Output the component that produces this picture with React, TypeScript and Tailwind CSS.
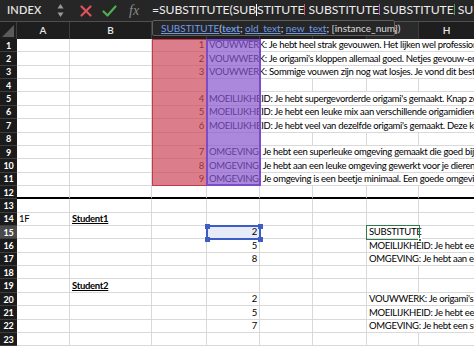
import React from "react";

type RowDef = {
  n: number;
  a?: string;
  b?: string;
  c?: number;
  d?: number;
  dText?: string;
  gText?: string;
  thick?: boolean;
  active?: boolean;
};

const rows: RowDef[] = [
  { n: 1, c: 1, dText: "VOUWWERK: Je hebt heel strak gevouwen. Het lijken wel professionele origami's!" },
  { n: 2, c: 2, dText: "VOUWWERK: Je origami's kloppen allemaal goed. Netjes gevouw-en!" },
  { n: 3, c: 3, dText: "VOUWWERK: Sommige vouwen zijn nog wat losjes. Je vond dit best lastig." },
  { n: 4 },
  { n: 5, c: 4, dText: "MOEILIJKHEID: Je hebt supergevorderde origami's gemaakt. Knap zeg!" },
  { n: 6, c: 5, dText: "MOEILIJKHEID: Je hebt een leuke mix aan verschillende origamidieren." },
  { n: 7, c: 6, dText: "MOEILIJKHEID: Je hebt veel van dezelfde origami's gemaakt. Deze keer" },
  { n: 8 },
  { n: 9, c: 7, dText: "OMGEVING: Je hebt een superleuke omgeving gemaakt die goed bij" },
  { n: 10, c: 8, dText: "OMGEVING: Je hebt aan een leuke omgeving gewerkt voor je dieren." },
  { n: 11, c: 9, dText: "OMGEVING: Je omgeving is een beetje minimaal. Een goede omgeving" },
  { n: 12, thick: true },
  { n: 13 },
  { n: 14, a: "1F", b: "Student1" },
  { n: 15, d: 2, gText: "SUBSTITUTE", active: true },
  { n: 16, d: 5, gText: "MOEILIJKHEID: Je hebt een leuke mix" },
  { n: 17, d: 8, gText: "OMGEVING: Je hebt aan een leuke" },
  { n: 18 },
  { n: 19, b: "Student2" },
  { n: 20, d: 2, gText: "VOUWWERK: Je origami's kloppen" },
  { n: 21, d: 5, gText: "MOEILIJKHEID: Je hebt een leuke mix" },
  { n: 22, d: 7, gText: "OMGEVING: Je hebt een superleuke" },
  { n: 23 },
];

function Cell({ w, children, right, bottom, fill }: { w: string; children?: React.ReactNode; right?: boolean; bottom: string; fill?: string }) {
  return (
    <div className={`${w} shrink-0 h-full border-r border-r-[#d9d9d9] ${bottom} ${fill ?? ""} flex items-center overflow-hidden whitespace-nowrap ${right ? "justify-end pr-[2px]" : "pl-[2px]"}`}>
      {children}
    </div>
  );
}

function GridRow({ r }: { r: RowDef }) {
  const bottom = r.thick ? "border-b-2 border-b-black" : "border-b border-b-[#d9d9d9]";
  return (
    <div className="flex h-[13.36px]">
      <div className={`w-[17px] shrink-0 h-full flex items-center justify-center font-bold text-[9px] text-white border-b border-b-[#3d3d3d] ${r.active ? "bg-[#4a4a4a]" : "bg-[#1b1b1b]"}`}>
        {r.n}
      </div>
      <Cell w="w-[53px]" bottom={bottom}>{r.a}</Cell>
      <Cell w="w-[82px]" bottom={bottom}>
        {r.b && <span className="font-bold underline underline-offset-[1px]">{r.b}</span>}
      </Cell>
      <Cell w="w-[55px]" bottom={bottom} right>{r.c}</Cell>
      {r.dText ? (
        <div className={`flex-1 min-w-0 h-full ${bottom} flex items-center overflow-hidden whitespace-nowrap pl-[2px]`}>{r.dText}</div>
      ) : (
        <>
          <Cell w="w-[53px]" bottom={bottom} right fill={r.active ? "bg-[#e7eaf7]" : ""}>{r.d}</Cell>
          <Cell w="w-[53px]" bottom={bottom} />
          <Cell w="w-[54px]" bottom={bottom} />
          {r.gText ? (
            <div className={`flex-1 min-w-0 h-full ${bottom} flex items-center overflow-hidden whitespace-nowrap pl-[2px]`}>{r.gText}</div>
          ) : (
            <>
              <Cell w="w-[52px]" bottom={bottom} />
              <div className={`flex-1 h-full ${bottom}`} />
            </>
          )}
        </>
      )}
    </div>
  );
}

function Bar({ color }: { color: string }) {
  return <span className={`inline-block w-[1px] h-[11px] align-[-1px] ${color}`} />;
}

export default function App() {
  return (
    <div className="w-[474px] h-[346px] overflow-hidden bg-white font-['Lato',sans-serif] text-black relative">
      {/* formula bar */}
      <div className="flex items-center h-[22px] bg-[#262626] border-b border-b-[#505050]">
        <div className="w-[57px] shrink-0 pl-[7px] text-[11px] font-semibold text-[#e4e4e4] tracking-[0.2px]">INDEX</div>
        <svg width="7" height="15" viewBox="0 0 7 15" className="shrink-0">
          <path d="M3.5 1 L6.5 5.5 L0.5 5.5 Z" fill="#9a9a9a" />
          <path d="M3.5 14 L6.5 9.5 L0.5 9.5 Z" fill="#9a9a9a" />
        </svg>
        <svg width="12" height="12" viewBox="0 0 12 12" className="shrink-0 ml-[16px]">
          <path d="M1.5 1.5 L10.5 10.5 M10.5 1.5 L1.5 10.5" stroke="#e2505c" strokeWidth="2.2" strokeLinecap="round" />
        </svg>
        <svg width="15" height="12" viewBox="0 0 15 12" className="shrink-0 ml-[10px]">
          <path d="M1.5 6.5 L5.5 10.5 L13.5 1.5" stroke="#4fae4f" strokeWidth="2.2" fill="none" strokeLinecap="round" strokeLinejoin="round" />
        </svg>
        <span className="shrink-0 ml-[12px] w-[14px] italic text-[14px] leading-none text-[#8a8a8a] font-['Liberation_Serif',serif]">fx</span>
        <div className="ml-[9px] whitespace-nowrap text-[12.2px] text-[#ececec] tracking-[-0.05px]">
          =SUBSTITUTE(SUB<span className="inline-block w-[1px] h-[12px] bg-white align-[-2px]" />STITUTE<Bar color="bg-[#d9505f]" /> SUBSTITUTE<Bar color="bg-[#9b66d8]" /> SUBSTITUTE<Bar color="bg-[#3f9a55]" /> SUBSTITUTE<Bar color="bg-[#d9505f]" /> SUBSTITUTE
        </div>
      </div>

      {/* column headers */}
      <div className="flex h-[17px] bg-[#1e1e1e] text-[10px] text-[#e8e8e8] font-semibold">
        <div className="w-[17px] shrink-0 h-full relative border-r border-r-[#3d3d3d]">
          <svg width="12" height="12" viewBox="0 0 12 12" className="absolute right-[2px] bottom-[2px]">
            <path d="M12 0 L12 12 L0 12 Z" fill="#5a5a5a" />
          </svg>
        </div>
        <div className="w-[53px] shrink-0 flex items-center justify-center border-r border-r-[#3d3d3d]">A</div>
        <div className="w-[82px] shrink-0 flex items-center justify-center border-r border-r-[#3d3d3d]">B</div>
        <div className="w-[55px] shrink-0 flex items-center justify-center border-r border-r-[#3d3d3d]">C</div>
        <div className="w-[53px] shrink-0 flex items-center justify-center border-r border-r-[#3d3d3d]">D</div>
        <div className="w-[53px] shrink-0 flex items-center justify-center border-r border-r-[#3d3d3d]">E</div>
        <div className="w-[54px] shrink-0 flex items-center justify-center border-r border-r-[#3d3d3d]">F</div>
        <div className="w-[52px] shrink-0 flex items-center justify-center border-r border-r-[#3d3d3d] bg-[#2a2a2a]">G</div>
        <div className="flex-1 flex items-center justify-center">H</div>
      </div>

      {/* function tooltip */}
      <div className="absolute left-[152px] top-[20px] w-[243px] h-[16px] bg-[#262626] border border-[#5e5e5e] rounded-[2px] flex items-center pl-[8px] text-[10px] whitespace-nowrap text-[#dcdcdc]">
        <span>
          <span className="text-[#6e9be6] underline">SUBSTITUTE</span>(<span className="text-[#6e9be6] underline font-bold">text</span>; <span className="text-[#6e9be6] underline">old_text</span>; <span className="text-[#6e9be6] underline">new_text</span>; [instance_num])
        </span>
      </div>

      {/* grid */}
      <div className="relative text-[9.5px] tracking-[-0.3px] leading-none">
        {rows.map((r) => (
          <GridRow key={r.n} r={r} />
        ))}

        {/* referenced ranges */}
        <div className="absolute left-[152px] top-0 w-[55px] h-[147px] bg-[rgba(205,70,90,0.7)] border border-[#c23a4c]" />
        <div className="absolute left-[206px] top-0 w-[55px] h-[147px] bg-[rgba(135,85,205,0.7)] border-2 border-[#7b4cc6]" />

        {/* selection D15 */}
        <div className="absolute left-[206px] top-[186px] w-[55px] h-[15px] border-2 border-[#3e5cc6]">
          <span className="absolute -left-[3.5px] -top-[3.5px] w-[5px] h-[5px] bg-[#3e5cc6]" />
          <span className="absolute -right-[3.5px] -top-[3.5px] w-[5px] h-[5px] bg-[#3e5cc6]" />
          <span className="absolute -left-[3.5px] -bottom-[3.5px] w-[5px] h-[5px] bg-[#3e5cc6]" />
          <span className="absolute -right-[3.5px] -bottom-[3.5px] w-[5px] h-[5px] bg-[#3e5cc6]" />
        </div>

        {/* active cell G15 */}
        <div className="absolute left-[366px] top-[186px] w-[54px] h-[14.5px] border-[1.5px] border-[#2f7d4a]">
          <span className="absolute -right-[3px] -bottom-[3px] w-[4px] h-[4px] bg-[#2f7d4a] border border-white" />
        </div>
      </div>
    </div>
  );
}
